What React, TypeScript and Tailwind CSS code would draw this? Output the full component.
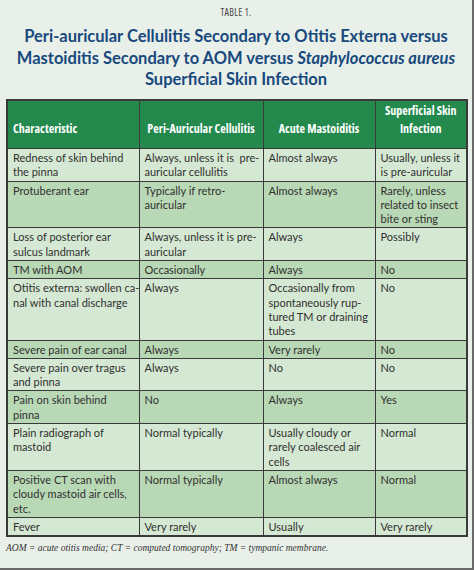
import React from "react";

type Row = { cells: string[][]; dark?: boolean };

const rows: Row[] = [
  {
    cells: [
      ["Redness of skin behind", "the pinna"],
      ["Always, unless it is\u00a0 pre-", "auricular cellulitis"],
      ["Almost always"],
      ["Usually, unless it", "is pre-auricular"],
    ],
  },
  {
    cells: [["Protuberant ear"], ["Typically if retro-", "auricular"], ["Almost always"], ["Rarely, unless", "related to insect", "bite or sting"]],
    dark: true,
  },
  {
    cells: [["Loss of posterior ear", "sulcus landmark"], ["Always, unless it is pre-", "auricular"], ["Always"], ["Possibly"]],
  },
  { cells: [["TM with AOM"], ["Occasionally"], ["Always"], ["No"]], dark: true },
  {
    cells: [
      ["Otitis externa: swollen ca-", "nal with canal discharge"],
      ["Always"],
      ["Occasionally from", "spontaneously rup-", "tured TM or draining", "tubes"],
      ["No"],
    ],
  },
  { cells: [["Severe pain of ear canal"], ["Always"], ["Very rarely"], ["No"]], dark: true },
  { cells: [["Severe pain over tragus", "and pinna"], ["Always"], ["No"], ["No"]] },
  { cells: [["Pain on skin behind", "pinna"], ["No"], ["Always"], ["Yes"]], dark: true },
  {
    cells: [["Plain radiograph of", "mastoid"], ["Normal typically"], ["Usually cloudy or", "rarely coalesced air", "cells"], ["Normal"]],
  },
  {
    cells: [["Positive CT scan with", "cloudy mastoid air cells,", "etc."], ["Normal typically"], ["Almost always"], ["Normal"]],
    dark: true,
  },
  { cells: [["Fever"], ["Very rarely"], ["Usually"], ["Very rarely"]] },
];

export default function App() {
  return (
    <div className="w-[474px] h-[570px] bg-[#e9f0ea] border-r-2 border-b-2 border-[#6a6a6a] overflow-hidden">
      <div className="pt-[6px] text-center text-[10px] leading-[12px] tracking-wide text-[#4a4a4a] font-['Open_Sans',sans-serif] font-stretch-[85%]">
        TABLE 1.
      </div>
      <h1 className="mt-[8px] text-center text-[16.5px] leading-[21.5px] font-bold text-[#17497d] font-['Lato',sans-serif]">
        Peri-auricular Cellulitis Secondary to Otitis Externa versus
        <br />
        Mastoiditis Secondary to AOM versus <i>Staphylococcus aureus</i>
        <br />
        Superficial Skin Infection
      </h1>
      <div className="px-[6px] mt-[8px]">
        <table className="w-[460px] border-collapse table-fixed border-2 border-[#3a3a3a] text-[11px] leading-[14.3px] text-[#303030] font-['Lato',sans-serif]">
          <colgroup>
            <col className="w-[132px]" />
            <col className="w-[124px]" />
            <col className="w-[112px]" />
            <col className="w-[92px]" />
          </colgroup>
          <thead>
            <tr className="bg-[#23894d] h-[49px] text-white text-[12px] leading-[18px] font-['Open_Sans',sans-serif] font-stretch-[75%]">
              <th className="border border-[#3a3a3a] text-left align-bottom px-[5px] pb-[10px] font-bold">Characteristic</th>
              <th className="border border-[#3a3a3a] text-center align-bottom px-[3px] pb-[10px] font-bold">Peri-Auricular Cellulitis</th>
              <th className="border border-[#3a3a3a] text-center align-bottom px-[3px] pb-[10px] font-bold">Acute Mastoiditis</th>
              <th className="border border-[#3a3a3a] text-center align-bottom px-[3px] pb-[10px] font-bold">
                Superficial Skin
                <br />
                Infection
              </th>
            </tr>
          </thead>
          <tbody>
            {rows.map((r, i) => (
              <tr key={i} className={r.dark ? "bg-[#b9d8b5]" : "bg-[#d5e8d3]"}>
                {r.cells.map((lines, j) => (
                  <td key={j} className="border border-[#3a3a3a] align-top px-[5px] pt-[2px] pb-[1px] whitespace-nowrap">
                    {lines.map((l, k) => (
                      <div key={k}>{l}</div>
                    ))}
                  </td>
                ))}
              </tr>
            ))}
          </tbody>
        </table>
        <p className="mt-[5px] text-[9.5px] leading-[12px] italic text-[#333] font-['Liberation_Serif',serif]">
          AOM = acute otitis media; CT = computed tomography; TM = tympanic membrane.
        </p>
      </div>
    </div>
  );
}
